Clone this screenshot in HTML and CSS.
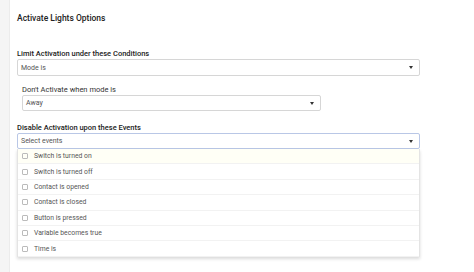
FILE: index.html
```html
<!DOCTYPE html>
<html lang="en">
<head>
  <meta charset="UTF-8">
  <title>Activate Lights Options</title>
  <link rel="stylesheet" href="styles.css">
</head>
<body>
<div class="page">
  <div class="panel">
    <h2 class="title">Activate Lights Options</h2>

    <div class="field">
      <label class="label">Limit Activation under these Conditions</label>
      <div class="select wide"><span>Mode is</span><i class="caret"></i></div>
    </div>

    <div class="field sub">
      <label class="label light">Don't Activate when mode is</label>
      <div class="select narrow"><span>Away</span><i class="caret"></i></div>
    </div>

    <div class="field">
      <label class="label">Disable Activation upon these Events</label>
      <div class="select wide focused"><span>Select events</span><i class="caret"></i></div>
      <ul class="menu">
        <li><span class="box"></span>Switch is turned on</li>
        <li><span class="box"></span>Switch is turned off</li>
        <li><span class="box"></span>Contact is opened</li>
        <li><span class="box"></span>Contact is closed</li>
        <li><span class="box"></span>Button is pressed</li>
        <li><span class="box"></span>Variable becomes true</li>
        <li><span class="box"></span>Time is</li>
      </ul>
    </div>
  </div>
</div>
</body>
</html>
```

FILE: styles.css
```css
* {
  box-sizing: border-box;
  margin: 0;
  padding: 0;
}

body {
  font-family: Roboto, "Liberation Sans", sans-serif;
  color: #222;
  background: #f5f5f5;
}

.page {
  padding-left: 9px;
  height: 272px;
}

.panel {
  background: #fff;
  height: 100%;
  border-left: 1px solid #ececec;
  padding: 13px 0 0 7px;
}

.title {
  font-size: 8.5px;
  line-height: 10px;
  font-weight: 500;
  color: #222;
  margin-bottom: 26px;
}

.field {
  width: 403px;
  margin-bottom: 9px;
}

.field.sub {
  padding-left: 5px;
  margin-bottom: 12px;
}

.label {
  display: block;
  font-size: 7.5px;
  line-height: 9px;
  font-weight: 500;
  margin-bottom: 1px;
}

.label.light {
  font-weight: 400;
  color: #333;
}

.select {
  display: flex;
  align-items: center;
  justify-content: space-between;
  height: 17px;
  border: 1px solid #d6d6d6;
  border-radius: 2px;
  padding: 0 6px 0 3px;
  font-size: 7px;
  color: #555;
  background: #fff;
}

.select.narrow {
  width: 299px;
  height: 16px;
}

.select.focused {
  height: 16px;
  border-color: #b9c7e6;
}

.caret {
  width: 0;
  height: 0;
  border-left: 2.5px solid transparent;
  border-right: 2.5px solid transparent;
  border-top: 3px solid #333;
}

.menu {
  list-style: none;
  border-left: 1px solid #e4e4e4;
  border-right: 1px solid #e4e4e4;
  box-shadow: 0 2px 3px rgba(0, 0, 0, 0.15);
  background: #fff;
}

.menu li {
  display: flex;
  align-items: center;
  height: 15.4px;
  padding-left: 4px;
  font-size: 6.8px;
  color: #555;
  border-bottom: 1px solid #f2f2f2;
}

.menu li:first-child {
  background: #fffff6;
}

.box {
  width: 6px;
  height: 6px;
  border: 1px solid #bbb;
  border-radius: 1px;
  margin-right: 6px;
}
```
